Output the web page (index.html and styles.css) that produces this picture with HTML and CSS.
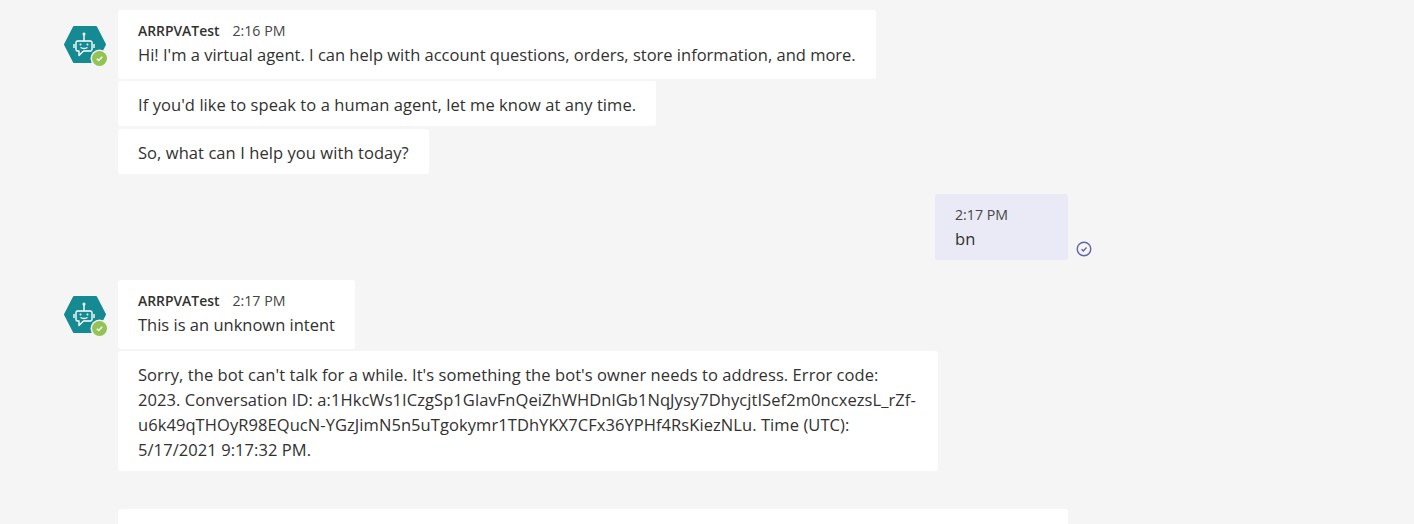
FILE: index.html
```html
<!DOCTYPE html>
<html lang="en">
<head>
  <meta charset="UTF-8" />
  <title>ARRPVATest chat</title>
  <link rel="stylesheet" href="styles.css">
</head>
<body>

<div class="thread">

  <div class="group">
    <div class="avatar">
      <svg width="44" height="40" viewBox="0 0 44 40">
        <polygon class="hex" points="10,2 32,2 41,19.500 32,37 10,37 1,19.500"/>
        <g class="bot">
          <circle cx="20" cy="9" r="1.500"/>
          <path d="M20 10v6M13.500 16h13a1.500 1.500 0 0 1 1.500 1.500v7a1.500 1.500 0 0 1-1.500 1.500h-7l-4.500 4.500v-4.500h-1.500a1.500 1.500 0 0 1-1.500-1.500v-7a1.500 1.500 0 0 1 1.500-1.500zM10 19v4M30 19v4M16.500 22.500q3.500 2 7 0"/>
          <circle cx="16.500" cy="19.500" r="1"/>
          <circle cx="23.500" cy="19.500" r="1"/>
        </g>
      </svg>
      <span class="status">
        <svg width="15" height="15" viewBox="0 0 15 15"><path d="M4.800 7.700l1.900 1.800 3.500-3.700"/></svg>
      </span>
    </div>
    <div class="bubbles">
      <div class="bubble named">
        <div class="meta"><span class="sender">ARRPVATest</span><span class="time">2:16 PM</span></div>
        <p class="tight">Hi! I'm a virtual agent. I can help with account questions, orders, store information, and more.</p>
      </div>
      <div class="bubble"><p>If you'd like to speak to a human agent, let me know at any time.</p></div>
      <div class="bubble last"><p>So, what can I help you with today?</p></div>
    </div>
  </div>

  <div class="mine">
    <div class="bubble own">
      <div class="meta"><span class="time">2:17 PM</span></div>
      <p>bn</p>
    </div>
    <svg class="read" width="16" height="16" viewBox="0 0 16 16">
      <circle cx="8" cy="8" r="6.800"/>
      <path d="M5.500 8.200l1.800 1.700 3.200-3.400"/>
    </svg>
  </div>

  <div class="group second">
    <div class="avatar">
      <svg width="44" height="40" viewBox="0 0 44 40">
        <polygon class="hex" points="10,2 32,2 41,19.500 32,37 10,37 1,19.500"/>
        <g class="bot">
          <circle cx="20" cy="9" r="1.500"/>
          <path d="M20 10v6M13.500 16h13a1.500 1.500 0 0 1 1.500 1.500v7a1.500 1.500 0 0 1-1.500 1.500h-7l-4.500 4.500v-4.500h-1.500a1.500 1.500 0 0 1-1.500-1.500v-7a1.500 1.500 0 0 1 1.500-1.500zM10 19v4M30 19v4M16.500 22.500q3.500 2 7 0"/>
          <circle cx="16.500" cy="19.500" r="1"/>
          <circle cx="23.500" cy="19.500" r="1"/>
        </g>
      </svg>
      <span class="status">
        <svg width="15" height="15" viewBox="0 0 15 15"><path d="M4.800 7.700l1.900 1.800 3.500-3.700"/></svg>
      </span>
    </div>
    <div class="bubbles">
      <div class="bubble named">
        <div class="meta"><span class="sender">ARRPVATest</span><span class="time">2:17 PM</span></div>
        <p class="tight">This is an unknown intent</p>
      </div>
      <div class="bubble wide">
        <p>Sorry, the bot can't talk for a while. It's something the bot's owner needs to address. Error code: 2023. Conversation ID: a:1HkcWs1ICzgSp1GlavFnQeiZhWHDnlGb1NqJysy7DhycjtISef2m0ncxezsL_rZf-u6k49qTHOyR98EQucN-YGzJimN5n5uTgokymr1TDhYKX7CFx36YPHf4RsKiezNLu. Time (UTC): 5/17/2021 9:17:32 PM.</p>
      </div>
    </div>
  </div>

  <div class="next"></div>

</div>

</body>
</html>
```

FILE: styles.css
```css
* { box-sizing: border-box; }
html, body {
  height: 100%;
  overflow: hidden;
}
body {
  margin: 0;
  background: #f5f5f5;
  font-family: 'Open Sans', 'Noto Sans', sans-serif;
  color: #323130;
}
p {
  margin: 0;
  letter-spacing: .07px;
}
p.tight { letter-spacing: 0; }
.thread {
  width: 1004px;
  margin-left: 64px;
  padding-top: 10px;
}
.group { display: flex; }
.avatar {
  position: relative;
  width: 54px;
  flex-shrink: 0;
  padding-top: 15px;
  line-height: 0;
}
.hex {
  fill: #158a93;
  stroke: #158a93;
  stroke-width: 2;
  stroke-linejoin: round;
}
.bot path {
  fill: none;
  stroke: #fff;
  stroke-width: 1.400;
  stroke-linejoin: round;
}
.bot circle { fill: #fff; }
.status {
  position: absolute;
  left: 28px;
  top: 41px;
  width: 15px;
  height: 15px;
  border-radius: 50%;
  background: #92c353;
  box-shadow: 0 0 0 1.500px #f5f5f5;
  line-height: 0;
}
.status path {
  fill: none;
  stroke: #fff;
  stroke-width: 1.500;
}
.bubbles {
  display: flex;
  flex-direction: column;
  align-items: flex-start;
  gap: 2px;
}
.bubble {
  background: #fff;
  border-radius: 3px;
  padding: 11px 20px 9px;
  font-size: 16.500px;
  line-height: 25px;
}
.named { padding-bottom: 12px; }
.last { margin-top: 1px; }
.wide { width: 820px; }
.meta {
  display: flex;
  align-items: baseline;
  gap: 13px;
  margin-bottom: 2px;
  font-size: 14.200px;
  line-height: 19px;
}
.sender { font-size: 13.900px; font-weight: 600; }
.time { color: #484644; }
.mine {
  position: relative;
  display: flex;
  justify-content: flex-end;
  margin-top: 20px;
}
.own {
  background: #e9eaf6;
  width: 133px;
}
.read {
  position: absolute;
  left: 1012px;
  top: 47px;
}
.read circle, .read path {
  fill: none;
  stroke: #6264a7;
  stroke-width: 1.400;
}
.second { margin-top: 20px; }
.next {
  background: #fff;
  border-radius: 3px;
  height: 40px;
  margin: 38px 0 0 54px;
}
```
